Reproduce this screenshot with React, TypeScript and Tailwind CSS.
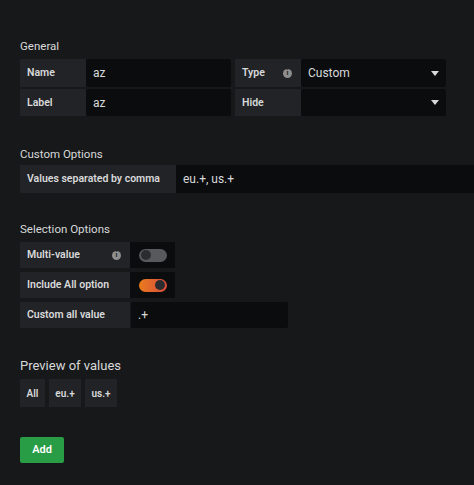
import React from "react";

const font = { fontFamily: "Roboto, 'Noto Sans', sans-serif" };

function Info() {
  return (
    <span className="flex h-[9px] w-[9px] items-center justify-center rounded-full bg-[#8e8e8e] text-[7px] font-bold leading-none text-[#222326]">
      i
    </span>
  );
}

function Caret() {
  return (
    <svg width="8" height="5" viewBox="0 0 8 5" className="text-[#d8d9da]">
      <path d="M0 0h8L4 5z" fill="currentColor" />
    </svg>
  );
}

function Label({ w, children, info }: { w: string; children: React.ReactNode; info?: boolean }) {
  return (
    <div className={`flex h-full items-center justify-between whitespace-nowrap bg-[#222326] pl-[7px] pr-[9px] text-[10.5px] font-semibold text-[#d8d9da] ${w}`}>
      <span>{children}</span>
      {info && <Info />}
    </div>
  );
}

function Input({ w, value, select }: { w: string; value?: string; select?: boolean }) {
  return (
    <div className={`flex h-full items-center justify-between rounded-[2px] bg-[#0b0c0e] pl-[7px] pr-[7px] text-[12px] text-[#d8d9da] ${w}`}>
      <span>{value}</span>
      {select && <Caret />}
    </div>
  );
}

function Toggle({ on }: { on?: boolean }) {
  return (
    <div className="flex h-full w-[45px] items-center justify-center bg-[#0b0c0e]">
      <div
        className={`flex h-[13px] w-[28px] items-center rounded-full px-[2px] ${
          on ? "justify-end bg-gradient-to-r from-[#eb7b18] to-[#d44a3a]" : "justify-start bg-[#58595c]"
        }`}
      >
        <div className="h-[10px] w-[10px] rounded-full bg-[#2b2c2f]" />
      </div>
    </div>
  );
}

function Title({ children, cls }: { children: React.ReactNode; cls: string }) {
  return <div className={`text-[11.5px] leading-[16px] text-[#d8d9da] ${cls}`}>{children}</div>;
}

function Chip({ children, w }: { children: React.ReactNode; w: string }) {
  return (
    <div className={`flex h-[28px] items-center justify-center bg-[#222326] text-[10px] font-semibold text-[#d8d9da] ${w}`}>
      {children}
    </div>
  );
}

export default function App() {
  return (
    <div className="min-h-[485px] w-[474px] overflow-hidden bg-[#17181a] pl-[20px]" style={font}>
      <Title cls="pt-[38px]">General</Title>
      <div className="mt-[5px] flex flex-col gap-[2px]">
        <div className="flex h-[28px] gap-[4px]">
          <div className="flex h-full">
            <Label w="w-[66px]">Name</Label>
            <Input w="w-[145px]" value="az" />
          </div>
          <div className="flex h-full">
            <Label w="w-[66px]" info>Type</Label>
            <Input w="w-[145px]" value="Custom" select />
          </div>
        </div>
        <div className="flex h-[27px] gap-[4px]">
          <div className="flex h-full">
            <Label w="w-[66px]">Label</Label>
            <Input w="w-[145px]" value="az" />
          </div>
          <div className="flex h-full">
            <Label w="w-[66px]">Hide</Label>
            <Input w="w-[145px]" select />
          </div>
        </div>
      </div>

      <Title cls="mt-[30px]">Custom Options</Title>
      <div className="mt-[3px] flex h-[28px]">
        <Label w="w-[156px] shrink-0">Values separated by comma</Label>
        <Input w="w-[320px] shrink-0" value="eu.+, us.+" />
      </div>

      <Title cls="mt-[28px]">Selection Options</Title>
      <div className="mt-[5px] flex flex-col gap-[4px]">
        <div className="flex h-[26px]">
          <Label w="w-[110px]" info>Multi-value</Label>
          <Toggle />
        </div>
        <div className="flex h-[26px]">
          <Label w="w-[110px]">Include All option</Label>
          <Toggle on />
        </div>
        <div className="flex h-[26px]">
          <Label w="w-[110px]">Custom all value</Label>
          <div className="w-[1px]" />
          <Input w="w-[157px]" value=".+" />
        </div>
      </div>

      <div className="mt-[29px] text-[13px] leading-[17px] text-[#d8d9da]">Preview of values</div>
      <div className="mt-[5px] flex gap-[4px]">
        <Chip w="w-[25px]">All</Chip>
        <Chip w="w-[32px]">eu.+</Chip>
        <Chip w="w-[32px]">us.+</Chip>
      </div>

      <button className="mt-[30px] flex h-[26px] w-[44px] items-center justify-center rounded-[2px] bg-[#299c46] text-[11px] font-semibold text-white">
        Add
      </button>
    </div>
  );
}
